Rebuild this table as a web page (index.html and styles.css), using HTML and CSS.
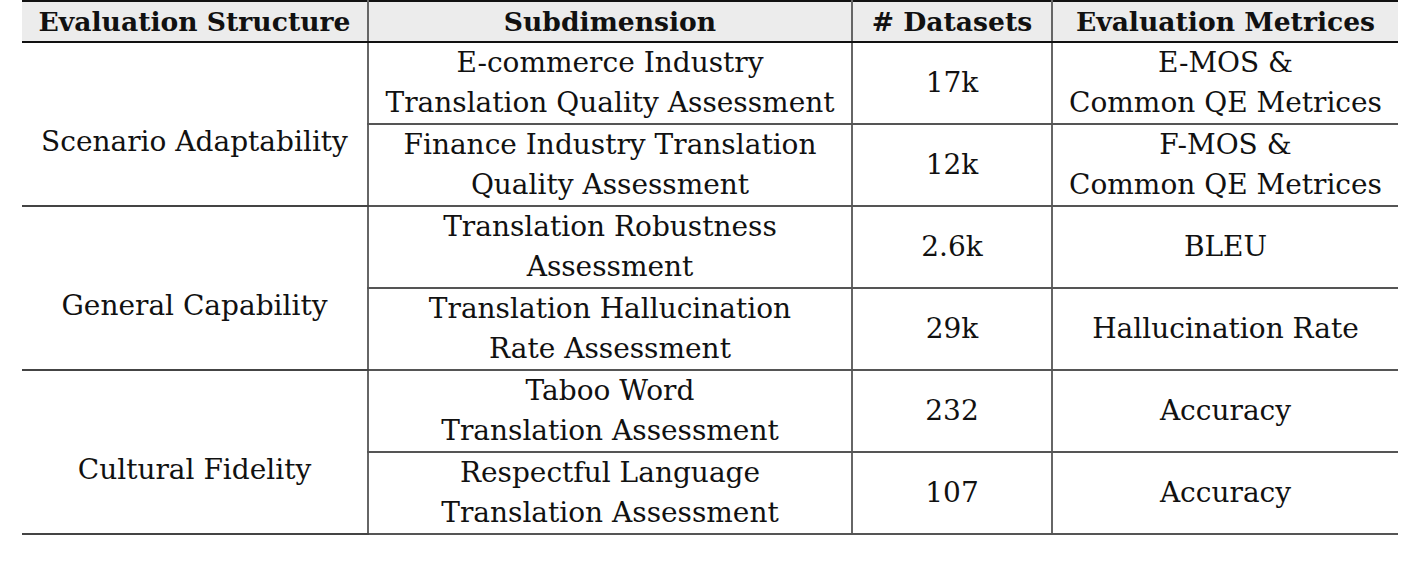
FILE: index.html
```html
<!DOCTYPE html>
<html>
<head>
<meta charset="utf-8">
<link rel="stylesheet" href="styles.css">
</head>
<body>
<table class="tbl">
  <colgroup>
    <col class="c1"><col class="c2"><col class="c3"><col class="c4">
  </colgroup>
  <thead>
    <tr class="head">
      <th>Evaluation Structure</th>
      <th>Subdimension</th>
      <th># Datasets</th>
      <th>Evaluation Metrices</th>
    </tr>
  </thead>
  <tbody>
    <tr class="sub">
      <td rowspan="2" class="group">Scenario Adaptability</td>
      <td>E-commerce Industry<br>Translation Quality Assessment</td>
      <td>17k</td>
      <td>E-MOS &amp;<br>Common QE Metrices</td>
    </tr>
    <tr class="sub last">
      <td>Finance Industry Translation<br>Quality Assessment</td>
      <td>12k</td>
      <td>F-MOS &amp;<br>Common QE Metrices</td>
    </tr>
    <tr class="sub">
      <td rowspan="2" class="group">General Capability</td>
      <td>Translation Robustness<br>Assessment</td>
      <td>2.6k</td>
      <td>BLEU</td>
    </tr>
    <tr class="sub last">
      <td>Translation Hallucination<br>Rate Assessment</td>
      <td>29k</td>
      <td>Hallucination Rate</td>
    </tr>
    <tr class="sub">
      <td rowspan="2" class="group">Cultural Fidelity</td>
      <td>Taboo Word<br>Translation Assessment</td>
      <td>232</td>
      <td>Accuracy</td>
    </tr>
    <tr class="sub last">
      <td>Respectful Language<br>Translation Assessment</td>
      <td>107</td>
      <td>Accuracy</td>
    </tr>
  </tbody>
</table>
</body>
</html>
```
FILE: styles.css
```css
html, body {
  margin: 0;
  padding: 0;
  background: #ffffff;
}

.tbl {
  margin-left: 22px;
  width: 1376px;
  border-collapse: collapse;
  table-layout: fixed;
  font-family: "DejaVu Serif", "Liberation Serif", serif;
  font-size: 28px;
  color: #111;
  border-top: 2px solid #111;
  border-bottom: 2px solid #444;
}

.c1 { width: 346px; }
.c2 { width: 484px; }
.c3 { width: 200px; }
.c4 { width: 346px; }

.head th {
  background: #ececec;
  font-weight: bold;
  font-size: 26.6px;
  height: 39px;
  padding: 0;
  line-height: 39px;
  border-bottom: 2px solid #111;
  text-align: center;
  white-space: nowrap;
}

.head th + th {
  border-left: 2px solid #666;
}

td {
  text-align: center;
  vertical-align: middle;
  padding: 0;
  line-height: 40px;
  white-space: nowrap;
}

.sub td {
  height: 80px;
  border-bottom: 2px solid #555;
}

td + td, .last td:first-child {
  border-left: 2px solid #666;
}

.sub td.group {
  padding-top: 36px;
  border-bottom: 2px solid #444;
}
```
